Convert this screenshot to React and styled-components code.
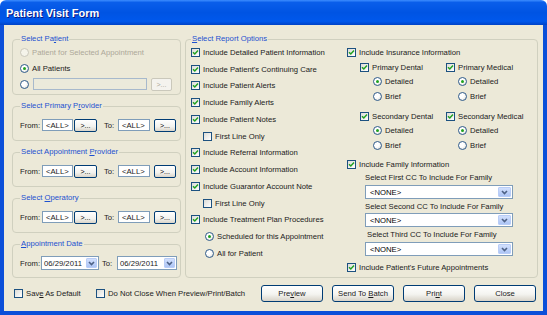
import React from "react";
import styled, { createGlobalStyle } from "styled-components";

const GlobalStyle = createGlobalStyle`
  html, body {
    margin: 0;
    padding: 0;
    background: #fff;
  }
  body {
    font-family: "Liberation Sans", Arial, sans-serif;
    font-size: 7.7px;
    color: #000;
  }
`;

const Window = styled.div`
  width: 547px;
  height: 315px;
  display: flex;
  flex-direction: column;
  overflow: hidden;
`;

const TitleBar = styled.div`
  height: 25px;
  flex: none;
  display: flex;
  align-items: center;
  padding-left: 6px;
  border-radius: 6px 6px 0 0;
  background: linear-gradient(#3d8dff 0%, #0a5eea 10%, #0054e3 50%, #0058ec 85%, #0043c6 100%);
  color: #fff;
  font-weight: bold;
  font-size: 11px;
  text-shadow: 1px 1px 0 #0a1883;
`;

const Body = styled.div`
  flex: 1;
  background: #ece9d8;
  border: 4px solid #0b4fd9;
  border-top: none;
  padding: 9px 5px 0 8px;
  display: flex;
  flex-direction: column;
`;

const Main = styled.div`
  display: flex;
  gap: 4px;
  height: 244px;
`;

const LeftCol = styled.div`
  width: 169px;
  display: flex;
  flex-direction: column;
  gap: 6px;
`;

const Group = styled.fieldset`
  margin: 0;
  min-width: 0;
  box-sizing: border-box;
  height: ${(p) => p.$h}px;
  padding: ${(p) => p.$pt || 0}px 0 0 ${(p) => p.$pl || 7}px;
  border: 1px solid #d0d0bf;
  border-radius: 4px;
`;

const Legend = styled.legend`
  padding: 0 1px;
  line-height: 10px;
  color: #1c50d0;
`;

const U = styled.span`
  text-decoration: underline;
`;

const Option = styled.div`
  display: flex;
  align-items: center;
  gap: 3px;
  height: ${(p) => p.$h || 16}px;
  padding-left: ${(p) => p.$indent || 0}px;
  margin-top: ${(p) => p.$mt || 0}px;
  color: ${(p) => (p.$disabled ? "#aca899" : "#1a1a1a")};
  white-space: nowrap;
`;

const CheckBox = styled.span`
  width: 9px;
  height: 9px;
  box-sizing: border-box;
  flex: none;
  border: 1px solid #1c5180;
  background: linear-gradient(135deg, #dcdcd7 0%, #ffffff 100%);
  display: inline-flex;
  align-items: center;
  justify-content: center;
`;

const RadioCircle = styled.span`
  width: 9px;
  height: 9px;
  box-sizing: border-box;
  flex: none;
  border-radius: 50%;
  border: 1px solid ${(p) => (p.$disabled ? "#cac8bb" : "#2f5b8c")};
  background: ${(p) =>
    p.$disabled
      ? "#f5f4ea"
      : "radial-gradient(circle at 35% 35%, #ffffff 0%, #ffffff 40%, #d6d6cc 100%)"};
  display: inline-flex;
  align-items: center;
  justify-content: center;

  &::after {
    content: "";
    width: 3px;
    height: 3px;
    border-radius: 50%;
    background: #21a121;
    display: ${(p) => (p.$checked ? "block" : "none")};
  }
`;

const Check = ({ checked }) => (
  <CheckBox>
    {checked && (
      <svg width="7" height="7" viewBox="0 0 7 7">
        <path d="M1 3.2 L2.8 5 L6 1.6" fill="none" stroke="#21a121" strokeWidth="1.5" />
      </svg>
    )}
  </CheckBox>
);

const CheckOption = ({ checked, children, ...rest }) => (
  <Option {...rest}>
    <Check checked={checked} />
    <span>{children}</span>
  </Option>
);

const RadioOption = ({ checked, disabled, children, ...rest }) => (
  <Option $disabled={disabled} {...rest}>
    <RadioCircle $checked={checked} $disabled={disabled} />
    <span>{children}</span>
  </Option>
);

const FieldRow = styled.div`
  display: flex;
  align-items: center;
  height: ${(p) => p.$h || 14}px;
  color: #1a1a1a;
`;

const RowLabel = styled.span`
  flex: none;
  width: ${(p) => p.$w}px;
  margin-left: ${(p) => p.$ml || 0}px;
`;

const TextBox = styled.div`
  flex: none;
  width: ${(p) => p.$w}px;
  height: 12px;
  margin-left: ${(p) => p.$ml || 0}px;
  box-sizing: border-box;
  border: 1px solid ${(p) => (p.$disabled ? "#a7b9cc" : "#7f9db9")};
  background: ${(p) => (p.$disabled ? "#ebeadb" : "#fff")};
  padding-left: 3px;
  display: flex;
  align-items: center;
`;

const DotsButton = styled.div`
  flex: none;
  width: ${(p) => p.$w || 23}px;
  height: 13px;
  margin-left: ${(p) => p.$ml || 1}px;
  box-sizing: border-box;
  border: 1px solid ${(p) => (p.$disabled ? "#cac8bb" : "#003c74")};
  border-radius: 2px;
  background: ${(p) =>
    p.$disabled ? "#f4f3ee" : "linear-gradient(#ffffff 0%, #f2f2ee 60%, #d9d4c9 100%)"};
  color: ${(p) => (p.$disabled ? "#aca899" : "#000")};
  font-size: 7px;
  display: flex;
  align-items: center;
  justify-content: center;
`;

const Combo = styled.div`
  flex: none;
  width: ${(p) => p.$w}px;
  height: 14px;
  margin-left: ${(p) => p.$ml || 0}px;
  margin-top: ${(p) => p.$mt || 0}px;
  box-sizing: border-box;
  border: 1px solid #7f9db9;
  background: #fff;
  display: flex;
  align-items: stretch;
`;

const ComboText = styled.span`
  flex: 1;
  padding-left: ${(p) => p.$pl || 2}px;
  display: flex;
  align-items: center;
  white-space: nowrap;
`;

const ArrowBtn = styled.span`
  flex: none;
  width: ${(p) => p.$w || 11}px;
  margin: 1px;
  box-sizing: border-box;
  border: 1px solid #b9cdf7;
  border-radius: 1px;
  background: linear-gradient(#d2e0fd, #adc5f5);
  display: flex;
  align-items: center;
  justify-content: center;
`;

const Chevron = () => (
  <svg width="7" height="5" viewBox="0 0 7 5">
    <path d="M1 1 L3.5 3.5 L6 1" fill="none" stroke="#4d6185" strokeWidth="1.6" />
  </svg>
);

const ComboBox = ({ w, ml, mt, pl, arrow, children }) => (
  <Combo $w={w} $ml={ml} $mt={mt}>
    <ComboText $pl={pl}>{children}</ComboText>
    <ArrowBtn $w={arrow}>
      <Chevron />
    </ArrowBtn>
  </Combo>
);

const ReportGroup = styled(Group)`
  flex: 1;
  display: flex;
`;

const OptCols = styled.div`
  display: flex;
`;

const OptCol = styled.div`
  width: ${(p) => (p.$w ? `${p.$w}px` : "auto")};
  display: flex;
  flex-direction: column;
`;

const LeftOptions = styled(OptCol)`
  & > div {
    height: 16.75px;
  }
`;

const SubCols = styled.div`
  display: flex;
  padding-left: 13px;
  margin-top: ${(p) => p.$mt || 0}px;
`;

const SubCol = styled.div`
  width: ${(p) => p.$w || 86}px;
  display: flex;
  flex-direction: column;
`;

const CcLabel = styled.div`
  height: 12px;
  line-height: 12px;
  margin-top: ${(p) => p.$mt || 0}px;
  padding-left: ${(p) => p.$pl || 18}px;
  white-space: nowrap;
  color: #1a1a1a;
`;

const Footer = styled.div`
  display: flex;
  align-items: center;
  height: 17px;
  margin-top: 7px;
  padding: 0 2px;
`;

const FooterItem = styled(Option)`
  width: ${(p) => p.$w}px;
  flex: none;
`;

const Buttons = styled.div`
  margin-left: auto;
  display: flex;
  gap: 9px;
`;

const Button = styled.div`
  width: 62px;
  height: 17px;
  box-sizing: border-box;
  border: 1px solid #003c74;
  border-radius: 3px;
  background: linear-gradient(#ffffff 0%, #f4f4f0 55%, #d8d3c8 100%);
  line-height: 15px;
  text-align: center;
  white-space: nowrap;
  color: #1a1a1a;
`;

const RangeRow = () => (
  <FieldRow>
    <RowLabel $w={22}>From:</RowLabel>
    <TextBox $w={31}>&lt;ALL&gt;</TextBox>
    <DotsButton $ml={1}>&gt;...</DotsButton>
    <RowLabel $w={14} $ml={7}>To:</RowLabel>
    <TextBox $w={32}>&lt;ALL&gt;</TextBox>
    <DotsButton $ml={4} $w={22}>&gt;...</DotsButton>
  </FieldRow>
);

export default function App() {
  return (
    <>
      <GlobalStyle />
      <Window>
        <TitleBar>Patient Visit Form</TitleBar>
        <Body>
          <Main>
            <LeftCol>
              <Group $h={61}>
                <Legend>
                  Select Pa<U>t</U>ient
                </Legend>
                <RadioOption disabled>Patient for Selected Appointment</RadioOption>
                <RadioOption checked>All Patients</RadioOption>
                <FieldRow $h={16}>
                  <RadioCircle />
                  <TextBox $w={114} $ml={4} $disabled />
                  <DotsButton $w={21} $ml={4} $disabled>
                    &gt;...
                  </DotsButton>
                </FieldRow>
              </Group>

              <Group $h={40} $pt={7}>
                <Legend>
                  Select Primary P<U>r</U>ovider
                </Legend>
                <RangeRow />
              </Group>

              <Group $h={40} $pt={7}>
                <Legend>
                  Select Appointment <U>P</U>rovider
                </Legend>
                <RangeRow />
              </Group>

              <Group $h={40} $pt={7}>
                <Legend>
                  Select <U>O</U>peratory
                </Legend>
                <RangeRow />
              </Group>

              <Group $h={39} $pt={7}>
                <Legend>
                  <U>A</U>ppointment Date
                </Legend>
                <FieldRow>
                  <RowLabel $w={21}>From:</RowLabel>
                  <ComboBox w={58}>06/29/2011</ComboBox>
                  <RowLabel $w={15} $ml={3}>
                    To:
                  </RowLabel>
                  <ComboBox w={60}>06/29/2011</ComboBox>
                </FieldRow>
              </Group>
            </LeftCol>

            <ReportGroup $h={244} $pl={5}>
              <Legend>
                <U>S</U>elect Report Options
              </Legend>
              <OptCols>
                <LeftOptions $w={156}>
                  <CheckOption checked>Include Detailed Patient Information</CheckOption>
                  <CheckOption checked>Include Patient's Continuing Care</CheckOption>
                  <CheckOption checked>Include Patient Alerts</CheckOption>
                  <CheckOption checked>Include Family Alerts</CheckOption>
                  <CheckOption checked>Include Patient Notes</CheckOption>
                  <CheckOption $indent={12}>First Line Only</CheckOption>
                  <CheckOption checked>Include Referral Information</CheckOption>
                  <CheckOption checked>Include Account Information</CheckOption>
                  <CheckOption checked>Include Guarantor Account Note</CheckOption>
                  <CheckOption $indent={12}>First Line Only</CheckOption>
                  <CheckOption checked>Include Treatment Plan Procedures</CheckOption>
                  <RadioOption checked $indent={14}>
                    Scheduled for this Appointment
                  </RadioOption>
                  <RadioOption $indent={14}>All for Patient</RadioOption>
                </LeftOptions>

                <OptCol>
                  <CheckOption checked>Include Insurance Information</CheckOption>
                  <SubCols>
                    <SubCol>
                      <CheckOption checked $h={14}>
                        Primary Dental
                      </CheckOption>
                      <RadioOption checked $h={15} $indent={13}>
                        Detailed
                      </RadioOption>
                      <RadioOption $h={15} $indent={13}>
                        Brief
                      </RadioOption>
                    </SubCol>
                    <SubCol>
                      <CheckOption checked $h={14}>
                        Primary Medical
                      </CheckOption>
                      <RadioOption checked $h={15} $indent={12}>
                        Detailed
                      </RadioOption>
                      <RadioOption $h={15} $indent={12}>
                        Brief
                      </RadioOption>
                    </SubCol>
                  </SubCols>
                  <SubCols $mt={5}>
                    <SubCol>
                      <CheckOption checked $h={14}>
                        Secondary Dental
                      </CheckOption>
                      <RadioOption checked $h={15} $indent={13}>
                        Detailed
                      </RadioOption>
                      <RadioOption $h={15} $indent={13}>
                        Brief
                      </RadioOption>
                    </SubCol>
                    <SubCol>
                      <CheckOption checked $h={14}>
                        Secondary Medical
                      </CheckOption>
                      <RadioOption checked $h={15} $indent={12}>
                        Detailed
                      </RadioOption>
                      <RadioOption $h={15} $indent={12}>
                        Brief
                      </RadioOption>
                    </SubCol>
                  </SubCols>
                  <CheckOption checked $mt={3}>
                    Include Family Information
                  </CheckOption>
                  <CcLabel>Select First CC To Include For Family</CcLabel>
                  <ComboBox w={148} ml={18} mt={1} pl={4} arrow={13}>
                    &lt;NONE&gt;
                  </ComboBox>
                  <CcLabel $mt={2}>Select Second CC To Include For Family</CcLabel>
                  <ComboBox w={148} ml={18} pl={4} arrow={13}>
                    &lt;NONE&gt;
                  </ComboBox>
                  <CcLabel $mt={2} $pl={20}>
                    Select Third CC To Include For Family
                  </CcLabel>
                  <ComboBox w={148} ml={18} mt={1} pl={4} arrow={13}>
                    &lt;NONE&gt;
                  </ComboBox>
                  <CheckOption checked $mt={3}>
                    Include Patient's Future Appointments
                  </CheckOption>
                </OptCol>
              </OptCols>
            </ReportGroup>
          </Main>

          <Footer>
            <FooterItem $w={82}>
              <Check />
              <span>
                Sav<U>e</U> As Default
              </span>
            </FooterItem>
            <FooterItem $w={160}>
              <Check />
              <span>Do Not Close When Preview/Print/Batch</span>
            </FooterItem>
            <Buttons>
              <Button>
                Pre<U>v</U>iew
              </Button>
              <Button>
                Send To <U>B</U>atch
              </Button>
              <Button>
                Pri<U>n</U>t
              </Button>
              <Button>Close</Button>
            </Buttons>
          </Footer>
        </Body>
      </Window>
    </>
  );
}
